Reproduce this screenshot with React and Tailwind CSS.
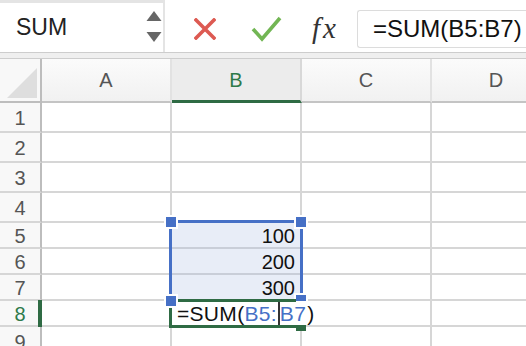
import React from 'react'

const cols = ['A', 'B', 'C', 'D']
const rows = [
  { n: 1, h: 'h-[30px]' },
  { n: 2, h: 'h-[30px]' },
  { n: 3, h: 'h-[30px]' },
  { n: 4, h: 'h-[30px]' },
  { n: 5, h: 'h-[26px]', v: '100' },
  { n: 6, h: 'h-[26px]', v: '200' },
  { n: 7, h: 'h-[26px]', v: '300' },
  { n: 8, h: 'h-[26px]', active: true },
  { n: 9, h: 'h-[30px]' },
]

function Toolbar() {
  return (
    <div className="flex h-[52px] bg-white">
      <div className="flex w-[165px] items-center justify-between border-t-[3px] border-r-2 border-[#e4e4e4] pl-4 pr-[1px]">
        <span className="text-[23px] leading-none text-[#222]">SUM</span>
        <svg width="16" height="32" viewBox="0 0 16 32" className="mb-[1px]">
          <polygon points="0.5,10 15.5,10 8,0" fill="#666" />
          <polygon points="0.5,21 15.5,21 8,31" fill="#666" />
        </svg>
      </div>
      <svg width="22" height="22" viewBox="0 0 22 22" className="ml-[29px] mt-[18px]">
        <path d="M2 2 L20 20 M20 2 L2 20" stroke="#dd5a52" strokeWidth="3.6" strokeLinecap="square" />
      </svg>
      <svg width="32" height="26" viewBox="0 0 32 26" className="ml-[34px] mt-[16px]">
        <path d="M3 13 L12 23 L30 2" stroke="#72b654" strokeWidth="3.6" fill="none" />
      </svg>
      <span className="ml-[30px] mt-[13px] w-[27px] font-['Liberation_Serif',serif] text-[29px] italic leading-[30px] tracking-[3px] text-[#333]">fx</span>
      <div className="ml-[18px] mt-[10px] flex h-[38px] flex-1 items-center rounded-l-[3px] border border-r-0 border-[#dcdcdc] pl-[15px]">
        <span className="text-[24px] leading-none text-[#111]">=SUM(B5:B7)</span>
      </div>
    </div>
  )
}

export default function App() {
  return (
    <div className="relative h-[346px] w-[526px] overflow-hidden bg-white font-['Liberation_Sans',Arial,sans-serif]">
      <Toolbar />
      <div className="h-[7px] border-y border-[#cdcdcd] bg-[#efefef]" />

      <div className="grid w-[562px] grid-cols-[42px_130px_130px_130px_130px]">
        <div className="relative h-[44px] border-r-2 border-b-2 border-[#bdbdbd] bg-[#f8f8f8]">
          <svg width="30" height="30" viewBox="0 0 30 30" className="absolute left-[7px] top-[9px]">
            <polygon points="30,0 30,30 0,30" fill="#dedede" />
          </svg>
        </div>
        {cols.map((c) => (
          <div
            key={c}
            className={
              c === 'B'
                ? 'flex h-[44px] items-center justify-center border-r-2 border-b-[3px] border-r-[#d8d8d8] border-b-[#2f6b44] bg-[#ececec] text-[20px] text-[#2f7a4a]'
                : 'flex h-[44px] items-center justify-center border-r-2 border-b-2 border-r-[#e2e2e2] border-b-[#c4c4c4] bg-gradient-to-b from-[#fbfbfb] to-[#f1f1f1] text-[20px] text-[#555]'
            }
          >
            {c}
          </div>
        ))}

        {rows.map((r) => (
          <React.Fragment key={r.n}>
            <div
              className={
                r.active
                  ? `relative flex ${r.h} items-center justify-center border-r-2 border-b-2 border-r-[#bdbdbd] border-b-[#d6d6d6] bg-[#f8f8f8] pt-[2px] text-[20px] text-[#2f7a4a]`
                  : `flex ${r.h} items-center justify-center border-r-2 border-b-2 border-r-[#bdbdbd] border-b-[#d6d6d6] bg-[#f8f8f8] pt-[2px] text-[20px] text-[#555]`
              }
            >
              {r.n}
              {r.active && <span className="absolute right-[-2px] top-[-1px] h-[27px] w-[4px] bg-[#2f6b44]" />}
            </div>
            <div className={`${r.h} border-r-2 border-b-2 border-[#d6d6d6]`} />
            <div
              className={
                r.v
                  ? `flex ${r.h} items-center justify-end border-r-2 border-b-2 border-r-[#d6d6d6] border-b-[#c9ced8] bg-[#e8edf7] pr-[5px] pt-[2px] text-[20px] text-[#111]`
                  : `${r.h} border-r-2 border-b-2 border-[#d6d6d6]`
              }
            >
              {r.v}
            </div>
            <div className={`${r.h} border-r-2 border-b-2 border-[#d6d6d6]`} />
            <div className={`${r.h} border-r-2 border-b-2 border-[#d6d6d6]`} />
          </React.Fragment>
        ))}
      </div>

      {/* referenced range B5:B7 */}
      <div className="absolute left-[169px] top-[220px] h-[82px] w-[134px] border-[3px] border-[#4670c6]" />
      <span className="absolute left-[166px] top-[217px] h-[10px] w-[10px] bg-[#4670c6] shadow-[0_0_0_2px_white]" />
      <span className="absolute left-[296px] top-[217px] h-[10px] w-[10px] bg-[#4670c6] shadow-[0_0_0_2px_white]" />
      <span className="absolute left-[296px] top-[295px] h-[6px] w-[10px] bg-[#4670c6] shadow-[0_0_0_2px_white]" />

      {/* in-cell editor B8 */}
      <div className="absolute left-[169px] top-[299px] h-[29px] w-[127px] border-y-[3px] border-l-[3px] border-[#2f6b44]" />
      <div className="absolute left-[172px] top-[302px] flex h-[23px] w-[148px] items-center bg-white pl-[5px] text-[21px] leading-[23px] tracking-[0.3px] text-[#111]">
        <span>=SUM(</span>
        <span className="text-[#4670c6]">B5:</span>
        <span className="ml-[1px] h-[23px] w-[2px] bg-[#333]" />
        <span className="text-[#4670c6]">B7</span>
        <span className="ml-[1px]">)</span>
      </div>
      <span className="absolute left-[296px] top-[325px] h-[6px] w-[10px] bg-[#2f6b44]" />
      <span className="absolute left-[166px] top-[296px] h-[10px] w-[10px] bg-[#4670c6] shadow-[0_0_0_2px_white]" />
    </div>
  )
}
